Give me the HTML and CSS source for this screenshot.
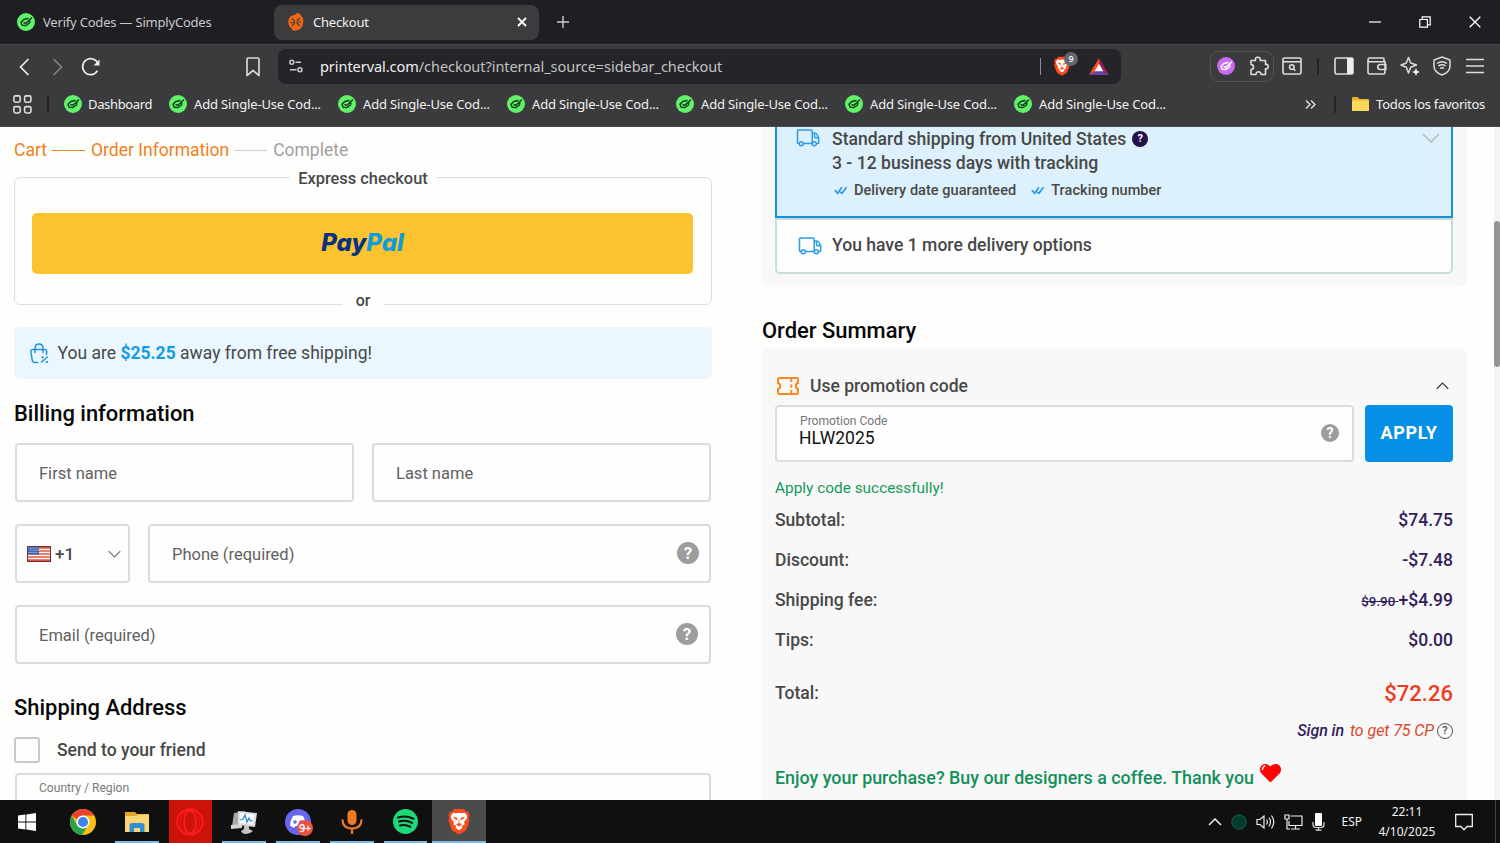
FILE: index.html
```html
<!DOCTYPE html>
<html lang="es">
<head>
<meta charset="utf-8">
<title>Checkout</title>
<link rel="stylesheet" href="styles.css">
</head>
<body>
<svg class="defs" width="0" height="0">
  <symbol id="code" viewBox="0 0 18 18"><circle cx="9" cy="9" r="9" fill="currentColor"/><path d="M11 5.500 6.800 6.500 4 9.300 5.200 12.300 9 12.500 12.500 10 12.800 8M7 9.800l2 .5 5.500-5.300" fill="none" stroke="var(--ink)" stroke-width="1.500" stroke-linejoin="round" stroke-linecap="round"/></symbol>
  <symbol id="truck" viewBox="0 0 24 20"><g fill="none" stroke="#2b9be6" stroke-width="1.500" stroke-linejoin="round"><path d="M3.300 15.500H2.500Q1.500 15.500 1.500 14.500V3Q1.500 2 2.500 2H15Q16.200 2 16.200 3.200V15.500H7.500M16.200 5H18.500Q20.300 5 21 6.500L22.700 10V14.500Q22.700 15.500 21.700 15.500H20.500"/><path d="M18.500 5.500v3.300q0 1 1 1h2.800"/><circle cx="5.300" cy="15.800" r="2"/><circle cx="18.300" cy="15.800" r="2"/></g></symbol>
  <symbol id="checks" viewBox="0 0 14 9"><path d="M.8 4.200 3.800 7.300l4-6M6.200 5.800l1.800 1.500 4.500-6" fill="none" stroke="#2b9be6" stroke-width="1.700"/></symbol>
  <symbol id="lion" viewBox="0 0 24 28"><path d="M7 1h10l2.500 3 2-.3 1.500 4-1 2.500L23 13l-3 8.500q-.5 1.500-2 2.500L12 27.500 6 24q-1.500-1-2-2.500L1 13l1-2.800L1 7.700l1.500-4 2 .3z" fill="#fb4c1f"/><path d="M12 5 15 5.500 18.200 5 20.500 8.500 19.800 11.500 17.300 14.500 17.800 17 15 18.500 15.500 20.500 12 23 8.500 20.500 9 18.500 6.200 17 6.700 14.500 4.200 11.500 3.500 8.500 5.800 5 9 5.500z" fill="#fff"/><path d="M6.500 9.500 10 10.500 9.500 12.500ZM17.500 9.500 14 10.500 14.500 12.500ZM12 12v4.500M9.500 17 12 16l2.500 1L12 19z" fill="#fb4c1f" stroke="#fb4c1f" stroke-width=".8"/></symbol>
  <symbol id="down" viewBox="0 0 18 10"><path d="m1 1 8 8 8-8" fill="none" stroke="currentColor" stroke-width="1.700"/></symbol>
</svg>

<header class="tabs">
  <div class="tab idle"><svg class="code"><use href="#code"/></svg><span>Verify Codes — SimplyCodes</span></div>
  <div class="tab active">
    <svg width="18" height="20" viewBox="0 0 18 20"><path d="M10 .8q1.500-.4 1.800.8 4.500 2.200 4.500 8.200 0 7.500-7.300 8.700-2 .5-3.500-.3-.8-.7-.8-1.700Q1.300 14.500 1.300 10q0-6.500 7.700-7.800z" fill="#f26614"/><path d="m5 6.500 3 3.200M12.800 6 9.800 9M9.300 10.500l3.500 3.300M8 10.800 5 14M3.500 10.200q2 1 4.500.3M10.500 10h3.500" fill="none" stroke="#3c3b3d" stroke-width="1.100"/></svg>
    <span>Checkout</span>
    <svg class="tab-x" width="10" height="10" viewBox="0 0 10 10"><path d="m1 1 8 8M9 1 1 9" stroke="#fff" stroke-width="1.900"/></svg>
  </div>
  <svg class="plus" width="12" height="12" viewBox="0 0 12 12"><path d="M6 0v12M0 6h12" stroke="#ccc" stroke-width="1.400"/></svg>
  <div class="win">
    <svg width="12" height="12"><path d="M0 6h12" stroke="#fff" stroke-width="1.200"/></svg>
    <svg width="12" height="12" fill="none" stroke="#fff" stroke-width="1.200"><path d="M.8 3.500h7.600v7.700H.8zM3.200 3.500V.8h8v8H8.500"/></svg>
    <svg width="12" height="12"><path d="m.7.7 10.600 10.600M11.300.7.7 11.300" stroke="#fff" stroke-width="1.300"/></svg>
  </div>
</header>

<section class="toolbar">
  <svg class="back" width="11" height="18" viewBox="0 0 11 18"><path d="M9.500 1 1.500 9l8 8" fill="none" stroke="#eee" stroke-width="1.700"/></svg>
  <svg class="fwd" width="11" height="18" viewBox="0 0 11 18"><path d="m1.500 1 8 8-8 8" fill="none" stroke="#858587" stroke-width="1.500"/></svg>
  <svg class="reload" width="20" height="20" viewBox="0 0 20 20"><path d="M17 6.500A8 8 0 1 0 16.500 13.800" fill="none" stroke="#eee" stroke-width="1.700"/><path d="M18.500 2.500v6h-6z" fill="#eee"/></svg>
  <svg class="mark" width="14" height="20" viewBox="0 0 14 20"><path d="M1 2.200Q1 1 2.200 1h9.600Q13 1 13 2.200V18.500L7 13.500 1 18.500z" fill="none" stroke="#d6d6d8" stroke-width="1.700" stroke-linejoin="round"/></svg>
  <div class="address">
    <svg width="14" height="14" viewBox="0 0 14 14" fill="none" stroke="#ccc" stroke-width="1.500"><circle cx="2.800" cy="3.200" r="2"/><circle cx="10.900" cy="10.800" r="2"/><path d="M6.500 3.200H12M1 10.800h6.500"/></svg>
    <span class="url"><b>printerval.com</b>/checkout?internal_source=sidebar_checkout</span>
    <i class="bar"></i>
    <div class="shield"><svg width="18" height="20"><use href="#lion"/></svg><em>9</em></div>
    <svg width="20" height="17" viewBox="0 0 20 17"><path d="M10 0 0 17l10-5z" fill="#ff4d1c"/><path d="m10 0 10 17-10-5z" fill="#9e1f63"/><path d="m0 17 10-6 10 6z" fill="#6843a0"/><path d="m10 5.800 4.300 7.400H5.700z" fill="#fff"/></svg>
  </div>
  <div class="extensions">
    <svg class="code purple"><use href="#code"/></svg>
    <svg width="20" height="20" viewBox="0 0 20 20"><path d="M2 4.500H6.500Q5.800 1.200 8.800 1.200T11.200 4.500H16.500V8.500Q19.200 8 19.200 10.500T16.500 12.700V18.500H12Q12 15.800 9.500 15.800T7 18.500H2V13.500Q4.500 13.500 4.500 11T2 8.500z" fill="none" stroke="#ddd" stroke-width="1.600" stroke-linejoin="round"/></svg>
  </div>
  <div class="actions">
    <svg width="20" height="18" viewBox="0 0 20 18" fill="none" stroke="#ddd" stroke-width="1.600"><rect x="1" y="1" width="18" height="16" rx="1.500"/><path d="M1 4.800h18"/><circle cx="9.800" cy="10" r="2.300"/><path d="m11.400 11.700 2 2"/></svg>
    <i class="sep"></i>
    <svg width="20" height="18" viewBox="0 0 20 18"><rect x="1" y="1" width="18" height="16" rx="1.500" fill="none" stroke="#ddd" stroke-width="1.600"/><path d="M13 1h6v16h-6z" fill="#eee"/></svg>
    <svg width="20" height="18" viewBox="0 0 20 18" fill="none" stroke="#ddd" stroke-width="1.600"><path d="M17 4.500V2q0-1-1-1H2.500Q1 1 1 2.700V15q0 2 2 2h13q2 0 2-2V4.700H2.500Q1 4.500 1 2.700M18.800 7.500h-5.500q-2.500 0-2.500 2.500t2.500 2.500h5.500z"/></svg>
    <svg width="20" height="20" viewBox="0 0 20 20"><path d="M8.500 1.500 10.700 7l5.800 2-5.800 2.300-2.200 5.700-2.200-5.700L1 9l5.300-2z" fill="none" stroke="#ddd" stroke-width="1.500" stroke-linejoin="round"/><path d="m16 12 1.200 2.800 2.800 1.200-2.800 1.200L16 20l-1.200-2.800L12 16l2.800-1.200z" fill="#eee"/></svg>
    <svg width="18" height="20" viewBox="0 0 18 20" fill="none" stroke="#ddd" stroke-width="1.500"><path d="M9 1 17 4v6q0 6-8 9-8-3-8-9V4z"/><path d="M4 7.500q5-3.500 10 0M5.300 10q3.700-2.600 7.400 0M7 12.500q2-1.400 4 0"/></svg>
    <svg class="burger" width="18" height="16" viewBox="0 0 18 16"><path d="M0 1.500h18M0 8h18M0 14.500h18" stroke="#ddd" stroke-width="1.600"/></svg>
  </div>
</section>

<nav class="bookmarks">
  <svg class="apps" width="19" height="19" viewBox="0 0 18 18" fill="none" stroke="#ddd" stroke-width="1.500"><rect x=".8" y=".8" width="6" height="6" rx="1.500"/><rect x="11" y=".8" width="6" height="6" rx="1.500"/><rect x=".8" y="11" width="6" height="6" rx="1.500"/><rect x="11" y="11" width="6" height="6" rx="1.500"/></svg>
  <i class="sep"></i>
  <div class="bm dash"><svg class="code"><use href="#code"/></svg><span>Dashboard</span></div>
  <div class="bm"><svg class="code"><use href="#code"/></svg><span>Add Single-Use Cod...</span></div>
  <div class="bm"><svg class="code"><use href="#code"/></svg><span>Add Single-Use Cod...</span></div>
  <div class="bm"><svg class="code"><use href="#code"/></svg><span>Add Single-Use Cod...</span></div>
  <div class="bm"><svg class="code"><use href="#code"/></svg><span>Add Single-Use Cod...</span></div>
  <div class="bm"><svg class="code"><use href="#code"/></svg><span>Add Single-Use Cod...</span></div>
  <div class="bm"><svg class="code"><use href="#code"/></svg><span>Add Single-Use Cod...</span></div>
  <div class="favs">
    <svg width="11" height="9" viewBox="0 0 11 9"><path d="m1 .5 4 4-4 4M6 .5l4 4-4 4" fill="none" stroke="#ddd" stroke-width="1.500"/></svg>
    <i class="sep"></i>
    <svg width="17" height="14" viewBox="0 0 17 14"><path d="M0 1q0-1 1-1h4.500l2 2H16q1 0 1 1v10q0 1-1 1H1q-1 0-1-1z" fill="#e9b52e"/><path d="M0 4.500Q0 3.500 1 3.500h15q1 0 1 1V13q0 1-1 1H1q-1 0-1-1z" fill="#fbd95b"/></svg>
    <span>Todos los favoritos</span>
  </div>
</nav>

<main class="page">
  <div class="left">
    <div class="steps"><span>Cart</span><i></i><span>Order Information</span><i class="off"></i><span class="off">Complete</span></div>
    <div class="express">
      <span class="cap top">Express checkout</span>
      <div class="paypal"><span class="pay">Pay</span><span class="pal">Pal</span></div>
      <span class="cap bottom">or</span>
    </div>
    <div class="notice">
      <svg width="19" height="21" viewBox="0 0 19 21" fill="none" stroke="#1c93dc" stroke-width="1.500" stroke-linecap="round"><path d="M7.500 19.500H5Q2.600 19.500 2.200 17L.9 9Q.6 6.500 3 6.500h11.500q2.400 0 2.200 2.500l-.3 2.500M5 9.500V5.500Q5 1 9 1t4 4.500V9.500M11.500 19 17.500 14"/><path d="M12.500 14.300h.2M17 19h.2" stroke-width="2.200"/></svg>
      <span>You are <b>$25.25</b> away from free shipping!</span>
    </div>
    <h2 class="h-bill">Billing information</h2>
    <div class="form">
      <div class="row two"><div class="field">First name</div><div class="field">Last name</div></div>
      <div class="row phone">
        <div class="code-select">
          <svg width="24" height="16" viewBox="0 0 24 16"><rect width="24" height="16" fill="#e8503e"/><path d="M0 3.500h24M0 6.500h24M0 9.500h24M0 12.500h24" stroke="#fff" stroke-width="1.300"/><rect width="12" height="8.500" fill="#3b64b4"/><path d="M1.500 2h10M2.500 4.200h9M1.500 6.400h10" stroke="#c9d8f2" stroke-width="1" stroke-dasharray="1 1"/><rect x=".5" y=".5" width="23" height="15" fill="none" stroke="#63343a"/></svg>
          <b>+1</b><svg class="chev" width="13" height="8"><use href="#down"/></svg>
        </div>
        <div class="field"><span>Phone (required)</span><em class="help">?</em></div>
      </div>
      <div class="field email"><span>Email (required)</span><em class="help">?</em></div>
    </div>
    <h2 class="h-ship">Shipping Address</h2>
    <label class="friend"><i></i><span>Send to your friend</span></label>
    <div class="country">Country / Region</div>
  </div>

  <div class="right">
    <section class="panel delivery">
      <div class="option selected">
        <svg class="truck" width="24" height="20"><use href="#truck"/></svg>
        <div class="copy">
          <div class="o1"><span>Standard shipping from United States</span><em class="help dark">?</em></div>
          <div class="o2">3 - 12 business days with tracking</div>
          <div class="o3"><svg width="14" height="9"><use href="#checks"/></svg><span class="g1">Delivery date guaranteed</span><svg width="14" height="9"><use href="#checks"/></svg><span>Tracking number</span></div>
        </div>
        <svg class="chev" width="18" height="10"><use href="#down"/></svg>
      </div>
      <div class="option more"><svg width="24" height="20"><use href="#truck"/></svg><span>You have 1 more delivery options</span></div>
    </section>
    <h2 class="h-sum">Order Summary</h2>
    <section class="panel summary">
      <div class="promo">
        <svg width="22" height="18" viewBox="0 0 22 18" fill="none" stroke="#f78a1d" stroke-width="2"><path d="M2.500 1h17Q21 1 21 2.500V6q-2.300.6-2.300 3t2.300 3v3.500q0 1.500-1.500 1.500h-17Q1 17 1 15.500V12q2.300-.6 2.300-3T1 6V2.500Q1 1 2.500 1z"/><path d="M14.300 2v3M14.300 7.200v3.600M14.300 13v3"/></svg>
        <span>Use promotion code</span>
        <svg class="up" width="13" height="8"><use href="#down"/></svg>
      </div>
      <div class="apply">
        <div class="field code-input"><div><small>Promotion Code</small><strong>HLW2025</strong></div><em class="help small">?</em></div>
        <button>APPLY</button>
      </div>
      <p class="success">Apply code successfully!</p>
      <div class="line"><span>Subtotal:</span><b>$74.75</b></div>
      <div class="line"><span>Discount:</span><b>-$7.48</b></div>
      <div class="line"><span>Shipping fee:</span><b><s>$9.90 </s>+$4.99</b></div>
      <div class="line"><span>Tips:</span><b>$0.00</b></div>
      <div class="line total"><span>Total:</span><b>$72.26</b></div>
      <div class="signin"><b>Sign in</b><span>to get 75 CP</span><em class="ring">?</em></div>
      <div class="enjoy"><span>Enjoy your purchase? Buy our designers a coffee. Thank you</span><svg width="23" height="20" viewBox="0 0 23 21"><path d="M11.500 20.500 1.500 10.500Q-1 6 2 2.500 6.500-1 11.500 3.500 16.500-1 21 2.500 24 6 21.500 10.500z" fill="#fb0505"/><path d="M3 7.500Q2.800 4 6 2.800" fill="none" stroke="#fff" stroke-width="1.400"/></svg></div>
    </section>
  </div>
  <div class="scroll"><i></i></div>
</main>

<footer class="taskbar">
  <div class="start"><svg width="18" height="18" viewBox="0 0 18 18" fill="#fff"><path d="M0 2.600 7.400 1.500v7H0zM8.300 1.400 18 0v8.500H8.300zM0 9.400h7.400v7L0 15.400zM8.300 9.400H18V18l-9.700-1.400z"/></svg></div>
  <div class="app"><svg width="26" height="26" viewBox="0 0 26 26"><circle cx="13" cy="13" r="13" fill="#fbc116"/><path d="M1.800 6.500A13 13 0 0 1 24.300 6.500H13a6.500 6.500 0 0 0-6 4z" fill="#ea4335"/><path d="M1.800 6.500A13 13 0 0 0 12 26l6-9.500a6.500 6.500 0 0 1-10.800 0z" fill="#2aa24c"/><circle cx="13" cy="13" r="6.500" fill="#fff"/><circle cx="13" cy="13" r="5.100" fill="#3b82f3"/></svg></div>
  <div class="app on"><svg width="24" height="20" viewBox="0 0 24 20"><path d="M0 0h10l2 2h12v18H0z" fill="#e5a526"/><path d="M0 4h11l2-1.500h11V20H0z" fill="#fbd774"/><path d="M4.500 20v-6.500q0-2.500 2.500-2.500h10q2.500 0 2.500 2.500V20h-4.500v-4H9v4z" fill="#2f8fd6"/></svg></div>
  <div class="app opera"><svg width="28" height="28" viewBox="0 0 28 28" fill="none" stroke="#ff1b20" stroke-width="1.800"><circle cx="14" cy="14" r="12.800"/><ellipse cx="14" cy="14" rx="6" ry="11.500"/><ellipse cx="14" cy="14" rx="9.500" ry="12.500" stroke-width=".8"/></svg></div>
  <div class="app on"><svg width="26" height="24" viewBox="0 0 26 24"><path d="M3 3 14 1 13 15 1 16z" fill="#a6aaa6"/><path d="M0 15 11 14v4L0 19z" fill="#d4d5d2"/><path d="m7 1 19 2-2 14-17-2z" fill="#ddd"/><path d="m9 3 14.500 1.600L22 14.500 8.500 13z" fill="#f5fbff"/><path d="m9 10 3-1 2-4 2 7 2-4 1.500 3 2-.5" fill="none" stroke="#2a86c6" stroke-width="1.200"/><path d="M13 16h5v3l4 2q-3 3-7 3t-5-3l3-2z" fill="#c5c5c3"/></svg></div>
  <div class="app on discord"><svg width="26" height="26" viewBox="0 0 26 26"><circle cx="13" cy="13" r="13" fill="#6866ee"/><path d="M8 7q5-1.500 10 0 3 5 3 9.500-2 1.800-4.500 2.200L15.500 17h-5l-1 1.700Q7 18.300 5 16.500 5 12 8 7z" fill="#fff"/><circle cx="10" cy="13" r="1.800" fill="#6866ee"/><circle cx="16" cy="13" r="1.800" fill="#6866ee"/></svg><em>9+</em></div>
  <div class="app on"><svg width="22" height="24" viewBox="0 0 22 24"><rect x="6.500" width="9" height="15" rx="4.500" fill="#f07a20"/><path d="M1.500 9.500q0 9 9.500 9t9.500-9M11 18.500V24" fill="none" stroke="#f07a20" stroke-width="2.200"/></svg></div>
  <div class="app on"><svg width="25" height="25" viewBox="0 0 25 25"><circle cx="12.500" cy="12.500" r="12.500" fill="#1bd978"/><path d="M5 8.500q8-2.500 15.500 1.200M6 12.500q7-2 13 1.300M7 16.500q5-1.500 10.300 1.200" fill="none" stroke="#101010" stroke-width="2.100" stroke-linecap="round"/></svg></div>
  <div class="app on current"><svg width="24" height="27"><use href="#lion"/></svg></div>
  <div class="tray">
    <svg width="14" height="8" viewBox="0 0 14 8"><path d="m1 7 6-6 6 6" fill="none" stroke="#eee" stroke-width="1.500"/></svg>
    <svg width="16" height="16" viewBox="0 0 16 16"><circle cx="8" cy="8" r="7.200" fill="#073b31" stroke="#106451"/></svg>
    <svg width="19" height="16" viewBox="0 0 19 16" fill="none" stroke="#eee" stroke-width="1.200"><path d="M1 5.500h3L8 2v12l-4-3.500H1zM10.500 5.500q1.700 2.500 0 5M13 3.500q3 4.500 0 9M15.500 1.500q4.500 6.500 0 13"/></svg>
    <svg width="19" height="16" viewBox="0 0 19 16" fill="none" stroke="#eee" stroke-width="1.200"><path d="M6.500 2H18v9.500H5V7M11.500 11.500V15M7 15h9M1 1h4v4H1zM3 5v10H6"/></svg>
    <svg width="13" height="18" viewBox="0 0 13 18"><rect x="3" width="7" height="13" rx="1" fill="#fff"/><path d="M1 9v2.500q0 3 3 3h5q3 0 3-3V9M6.500 14.500V17M3.500 17.200h6" fill="none" stroke="#ddd" stroke-width="1.200"/></svg>
    <span class="esp">ESP</span>
    <div class="clock"><span>22:11</span><span>4/10/2025</span></div>
    <svg width="18" height="18" viewBox="0 0 18 18"><path d="M.7 1.500h16.600v12H12L9 16.800l-3-3.300H.7z" fill="none" stroke="#eee" stroke-width="1.300"/></svg>
    <i></i>
  </div>
</footer>
</body>
</html>
```
FILE: styles.css
```css
* { box-sizing: border-box; }
body { margin: 0; width: 1500px; height: 843px; overflow: hidden; display: flex; flex-direction: column; background: #fefefd; font-family: Roboto, "Liberation Sans", sans-serif; color: #484848; white-space: nowrap; }
svg { flex: none; display: block; }
em { font-style: normal; }
h2, p { margin: 0; }
.defs { position: absolute; }

/* browser chrome */
.tabs, .toolbar, .bookmarks, .taskbar { flex: none; display: flex; align-items: center; font-family: "Noto Sans", "Open Sans", sans-serif; font-size: 13px; color: #f2f2f2; }
.tabs { height: 44px; background: #1f1e23; letter-spacing: -.2px; }
.code { width: 18px; height: 18px; color: #61f26a; --ink: #153c1c; }
.purple { color: #c86bf0; --ink: #fff; }
.tab { display: flex; align-items: center; height: 35px; }
.idle { width: 257px; margin-left: 17px; gap: 8px; color: #c9c9cb; }
.active { width: 265px; padding: 0 12px 0 13px; border-radius: 8px; background: #3c3b3d; gap: 8px; }
.tab-x { margin-left: auto; }
.plus { margin-left: 18px; }
.win { display: flex; gap: 38px; margin-left: auto; padding-right: 19px; }
.toolbar { height: 44px; background: #3b3b3d; border-top: 1px solid #454447; }
.back { margin-left: 19px; }
.fwd { margin-left: 22px; }
.reload { margin-left: 18px; }
.mark { margin-left: 145px; }
.address { display: flex; align-items: center; width: 843px; height: 35px; margin: -1px 0 0 18px; padding: 0 12px 0 11px; border-radius: 8px; background: #252429; }
.url { margin-left: 17px; font-size: 14.500px; letter-spacing: -.05px; color: #c2c2c4; }
.url b { font-weight: 400; color: #f0f0f0; }
.bar { width: 1px; height: 17px; margin-left: auto; background: #8c8c90; }
.shield { position: relative; margin: 0 18px 0 12px; }
.shield em { position: absolute; left: 11px; top: -4px; width: 14px; height: 14px; border-radius: 7px; background: #66656f; font-size: 9px; font-weight: 600; line-height: 14px; text-align: center; }
.extensions { display: flex; align-items: center; justify-content: space-between; width: 64px; height: 31px; margin: -1px 0 0 89px; padding: 0 4px 0 6px; border: 1px solid #545457; border-radius: 9px; }
.actions { display: flex; align-items: center; gap: 13px; margin: -1px 0 0 8px; }
.sep { width: 2px; height: 17px; background: #242427; }
.actions .sep { margin: 0 2px; }
.burger { margin-left: 2px; }
.bookmarks { height: 39px; padding-bottom: 6px; background: #3b3b3d; border-bottom: 1px solid #4b4a4d; letter-spacing: -.15px; }
.apps { margin-left: 13px; }
.apps + .sep { margin: 0 15px; }
.bm { display: flex; align-items: center; gap: 7px; width: 169px; }
.dash { width: 105px; gap: 6px; letter-spacing: -.35px; }
.favs { display: flex; align-items: center; margin-left: auto; padding-right: 15px; letter-spacing: -.28px; }
.favs .sep { margin: 0 16px 0 18px; }
.favs span { margin-left: 7px; }

/* page */
.page { flex: none; height: 673px; display: flex; overflow: hidden; }
.left { width: 698px; margin-left: 14px; }
.right { width: 705px; margin-left: 50px; }
.steps { display: flex; align-items: center; height: 22px; margin-top: 12px; font-size: 17.500px; color: #f0801a; }
.steps i { width: 33px; height: 1px; margin: 0 6px 0 5px; background: #ee8420; }
.steps .off { color: #a1a1a1; }
.steps i.off { background: #cfcfcf; }
.express { position: relative; height: 128px; margin-top: 16px; padding: 35px 18px 0 17px; border: 1px solid #dedede; border-radius: 6px; }
.cap { position: absolute; left: 50%; transform: translateX(-50%); background: #fefefd; font-weight: 500; font-size: 16.400px; line-height: 20px; text-align: center; }
.top { top: -9px; width: 146px; }
.bottom { bottom: -7px; width: 41px; font-size: 16px; }
.paypal { display: flex; justify-content: center; align-items: center; height: 61px; border-radius: 5px; background: #fcc32f; font-family: Inter, sans-serif; font-weight: 800; font-style: italic; font-size: 24px; padding-bottom: 2px; }
.pay { color: #08317f; }
.pal { color: #109bdc; }
.notice { display: flex; align-items: center; gap: 9px; height: 52px; margin-top: 22px; padding: 0 16px; border-radius: 5px; background: #eaf7fe; font-size: 17.520px; }
.notice span { margin: -1px 0 0 -.500px; }
.notice b { font-weight: 700; color: #169be5; }
h2 { color: #080808; font-size: 21.950px; line-height: 28px; font-weight: 500; }
.h-bill { margin-top: 21px; }
.form { display: flex; flex-direction: column; gap: 22.200px; margin: 15px 1px 0; }
.row { display: grid; gap: 18px; }
.two { grid-template-columns: 339px 339px; }
.phone { grid-template-columns: 115px 563px; }
.field, .code-select { display: flex; align-items: center; height: 59px; border: 2px solid #dcdcdc; border-radius: 4px; background: #fefefe; }
.field { padding: 2px 10px 0 22px; font-size: 16.500px; color: #616161; justify-content: space-between; }
.email { padding-right: 11px; }
.code-select { padding: 0 7px 0 10px; }
.code-select b { margin-left: 4px; font-weight: 500; font-size: 17px; }
.chev { margin-left: auto; color: #777; }
.help { flex: none; display: block; width: 22px; height: 22px; margin-top: -4px; border-radius: 50%; background: #9d9d9d; color: #fff; font-size: 17px; line-height: 22px; font-weight: 700; text-align: center; }
.h-ship { margin-top: 29.600px; }
.friend { display: flex; align-items: center; gap: 17px; height: 26px; margin-top: 15px; font-size: 17.550px; font-weight: 500; }
.friend i { width: 26px; height: 26px; border: 2px solid #c9c9c9; border-radius: 3px; }
.country { height: 60px; margin: 10px 1px 0; padding: 6px 22px; border: 2px solid #dcdcdc; border-radius: 4px; font-size: 12.100px; line-height: 15px; color: #7b7b7b; }

.panel { background: #f8f8f8; padding: 0 14px 0 13px; }
.delivery { height: 160px; border-radius: 0 0 6px 6px; }
.option { display: flex; font-size: 17.570px; font-weight: 500; }
.selected { height: 91px; border: 2px solid #1290dc; border-top: 0; background: #dcf1fb; padding: 0 11px 0 19px; }
.truck { margin-top: 1px; }
.copy { margin: -1px 0 0 12px; }
.o1 { display: flex; align-items: center; gap: 6px; height: 25px; }
.dark { width: 16px; height: 16px; margin: 1px 0 0; background: #26104c; font-size: 11px; line-height: 16px; }
.o2 { line-height: 24px; }
.o3 { display: flex; align-items: center; height: 31px; font-size: 14.500px; letter-spacing: .05px; gap: 6px; padding-left: 2px; }
.o3 .g1 { margin-right: 9px; }
.selected .chev { margin-top: 6px; color: #b7bec1; }
.more { height: 56px; align-items: center; gap: 10px; border: 2px solid #c6ded6; border-radius: 0 0 5px 5px; background: #fefefe; padding: 0 20px 3px 21px; }
.more svg { margin-top: 3px; }
.h-sum { margin-top: 30px; }
.summary { height: 470px; margin-top: 3px; padding-top: 25px; border-radius: 6px; }
.promo { display: flex; align-items: center; height: 25px; padding: 0 4px 0 2px; gap: 11px; font-size: 17.550px; font-weight: 500; }
.up { margin-left: auto; transform: rotate(180deg); color: #333; }
.apply { display: flex; justify-content: space-between; margin-top: 7px; }
.code-input { width: 579px; height: 57px; padding: 0 13px 0 22px; }
.code-input div { display: flex; flex-direction: column; margin-top: -7px; }
.code-input small { font-size: 12.100px; line-height: 16px; padding-left: 1px; color: #777; }
.code-input strong { font-size: 17.500px; line-height: 19px; font-weight: 400; color: #111; }
.small { width: 18px; height: 18px; margin: -1px 0 0; font-size: 14px; line-height: 18px; }
.apply button { width: 88px; height: 57px; padding: 0 0 2px; border: 0; border-radius: 4px; background: #0790e5; color: #fff; font: 700 18px Roboto, sans-serif; letter-spacing: .6px; }
.success { margin-top: 15px; font-size: 15.400px; line-height: 22px; color: #16985c; }
.line { display: flex; justify-content: space-between; align-items: center; height: 40px; font-size: 17.550px; font-weight: 500; }
.success + .line { margin-top: 1px; }
.line b { font-weight: 500; color: #33205a; }
.line s { font-size: 13.300px; }
.total { margin-top: 13px; }
.total b { font-size: 22px; color: #f23a1e; }
.signin { display: flex; justify-content: flex-end; align-items: center; height: 22px; margin-top: 6px; font-size: 16px; letter-spacing: -.08px; font-style: italic; }
.signin b { font-weight: 500; color: #33205a; margin-right: 6px; }
.signin span { color: #d9492e; }
.ring { width: 16px; height: 16px; margin: 1px 0 0 3px; border: 1.500px solid #555; border-radius: 50%; font-size: 11px; line-height: 13px; text-align: center; font-weight: 500; }
.enjoy { display: flex; align-items: center; gap: 5px; margin-top: 24px; font-size: 17.880px; line-height: 26px; font-weight: 500; color: #13905a; }
.enjoy svg { margin-top: -10px; }
.scroll { width: 6px; margin-left: auto; background: #f4f4f4; padding-top: 94px; }
.scroll i { display: block; height: 146px; border-radius: 3px; background: #949494; }

/* taskbar */
.taskbar { height: 43px; background: #101010; }
.start { width: 56px; display: flex; justify-content: center; padding-right: 3px; }
.app { position: relative; width: 53.750px; height: 43px; display: flex; align-items: center; justify-content: center; }
.on::after { content: ""; position: absolute; bottom: 0; left: 5px; right: 5px; height: 2px; background: #76b9ed; }
.opera { width: 43.750px; margin: 0 5px; background: #cb1309; }
.current { background: #4b4b4b; }
.current::after { left: 0; right: 0; }
.discord em { position: absolute; left: 26px; top: 20px; width: 16px; height: 16px; border-radius: 8px; background: #ed5144; color: #fff; font-size: 11px; font-weight: 600; letter-spacing: -.4px; line-height: 16px; text-align: center; }
.tray { display: flex; align-items: center; margin-left: auto; gap: 9px; font-size: 12px; }
.esp { margin-left: 7px; }
.clock { display: flex; flex-direction: column; align-items: center; width: 66px; margin: 0 6px 0 3px; line-height: 20px; }
.tray i { width: 1px; height: 43px; margin: 0 4px 0 13px; background: #444; }
```
